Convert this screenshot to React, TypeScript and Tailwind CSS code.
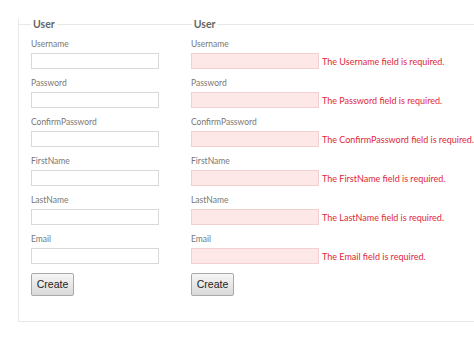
const fields = ["Username", "Password", "ConfirmPassword", "FirstName", "LastName", "Email"];

function Field({ name, invalid }: { name: string; invalid: boolean }) {
  return (
    <div className="flex flex-col">
      <label className="h-[14px] text-[8.5px] leading-[14px] text-[#777]">{name}</label>
      <div className="mt-[2px] flex items-center">
        <input
          className={
            invalid
              ? "h-[16px] w-[128px] shrink-0 border border-[#f2d0d0] bg-[#fde7e7] outline-none"
              : "h-[16px] w-[128px] shrink-0 border border-[#d9d9d9] bg-white outline-none"
          }
        />
        {invalid && (
          <span className="ml-[3px] mt-[1px] whitespace-nowrap text-[9px] text-[#e0283a]">
            The {name} field is required.
          </span>
        )}
      </div>
    </div>
  );
}

function Column({ invalid }: { invalid: boolean }) {
  return (
    <div className="flex w-[160px] flex-col gap-[7px]">
      {fields.map((f) => (
        <Field key={f} name={f} invalid={invalid} />
      ))}
      <div className="flex pt-[2px]">
        <button className="h-[23px] w-[43px] rounded-[2px] border border-[#a9a9a9] bg-gradient-to-b from-[#f6f6f6] to-[#d9d9d9] text-[10.5px] text-[#222] [font-family:'Liberation_Sans',Arial,sans-serif]">
          Create
        </button>
      </div>
    </div>
  );
}

export default function App() {
  return (
    <div className="h-[342px] w-[474px] overflow-hidden bg-white pl-[18px] pt-[19px] font-['Lato',sans-serif]">
      <div className="border-b border-l border-[#e8e8e8] pb-[25px]">
        {/* legend row */}
        <div className="-mb-px flex h-[10px] items-center">
          <div className="h-px w-[12px] bg-[#e8e8e8]" />
          <span className="px-[2px] text-[10.5px] font-bold leading-[10px] text-[#666]">User</span>
          <div className="h-px w-[135px] bg-[#e8e8e8]" />
          <span className="px-[2px] text-[10.5px] font-bold leading-[10px] text-[#666]">User</span>
          <div className="h-px flex-1 bg-[#e8e8e8]" />
        </div>
        <div className="mt-[9px] flex pl-[12px]">
          <Column invalid={false} />
          <Column invalid={true} />
        </div>
      </div>
    </div>
  );
}
